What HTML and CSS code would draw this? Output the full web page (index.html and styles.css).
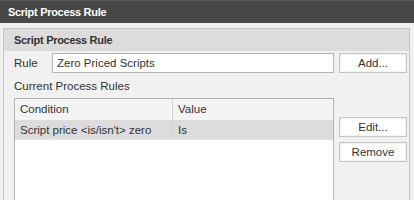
FILE: index.html
```html
<!DOCTYPE html>
<html lang="en">
<head>
    <meta charset="UTF-8">
    <title>Script Process Rule</title>
    <link rel="stylesheet" href="styles.css">
</head>
<body>
    <div class="titlebar">Script Process Rule</div>
    <div class="panel">
        <div class="panel-head">Script Process Rule</div>
        <div class="panel-body">
            <div class="rule-row">
                <div class="rule-main">
                    <label class="rule-label" for="rule-name">Rule</label>
                    <input class="rule-input" id="rule-name" type="text" value="Zero Priced Scripts">
                </div>
                <button class="btn">Add...</button>
            </div>
            <div class="rules-section">
                <div class="rules-main">
                    <div class="section-label">Current Process Rules</div>
                    <div class="rules-list">
                        <div class="list-row list-head">
                            <div class="col-cond">Condition</div>
                            <div class="col-value">Value</div>
                        </div>
                        <div class="list-row selected">
                            <div class="col-cond">Script price &lt;is/isn't&gt; zero</div>
                            <div class="col-value">Is</div>
                        </div>
                    </div>
                </div>
                <div class="rules-side">
                    <button class="btn">Edit...</button>
                    <button class="btn">Remove</button>
                </div>
            </div>
        </div>
    </div>
</body>
</html>
```

FILE: styles.css
```css
* {
    margin: 0;
    padding: 0;
    box-sizing: border-box;
}

body {
    font-family: "Liberation Sans", Arial, sans-serif;
    font-size: 11.5px;
    color: #333;
    background-color: #f0f0f0;
}

/* Title bar */
.titlebar {
    height: 23px;
    line-height: 23px;
    padding-left: 8px;
    background-color: #474747;
    border-top: 1px solid #5a5a5a;
    color: #fff;
    font-size: 11px;
    font-weight: bold;
    letter-spacing: -0.3px;
}

/* Panel */
.panel {
    margin: 5px 4px 0 3px;
    border: 1px solid #c6c6c6;
    background-color: #f1f1f1;
    height: 200px;
}

.panel-head {
    height: 22px;
    line-height: 22px;
    padding-left: 10px;
    background-color: #dcdcdc;
    font-size: 11px;
    font-weight: bold;
    letter-spacing: -0.3px;
}

.panel-body {
    padding: 2px 2px 0 10px;
}

.rule-row {
    display: flex;
    gap: 5px;
}

.rule-main {
    flex: 1;
    display: flex;
    align-items: center;
}

.rule-label {
    width: 38px;
}

.rule-input {
    flex: 1;
    height: 20px;
    border: 1px solid #b4b4b4;
    background-color: #fff;
    font: inherit;
    color: #333;
    padding-left: 4px;
}

.btn {
    width: 68px;
    height: 20px;
    border: 1px solid #c4c4c4;
    box-shadow: inset 0 0 0 1px #f4f4f4;
    background-color: #fff;
    font: inherit;
    color: #333;
}

/* Rules list */
.rules-section {
    display: flex;
    gap: 5px;
}

.rules-main {
    flex: 1;
}

.section-label {
    padding: 7px 0 3px;
    height: 25px;
}

.rules-list {
    border: 1px solid #b4b4b4;
    background-color: #fff;
    height: 120px;
}

.list-row {
    display: flex;
    height: 20px;
    line-height: 20px;
}

.list-head {
    height: 21px;
    line-height: 21px;
    background-color: #f4f4f4;
}

.list-row.selected {
    background-color: #dcdcdc;
    border-bottom: 1px solid #e6e6e6;
}

.col-cond {
    width: 158px;
    padding-left: 5px;
    border-right: 1px solid #d4d4d4;
}

.col-value {
    flex: 1;
    padding-left: 5px;
}

.rules-side {
    display: flex;
    flex-direction: column;
    gap: 5px;
    padding-top: 44px;
}
```
